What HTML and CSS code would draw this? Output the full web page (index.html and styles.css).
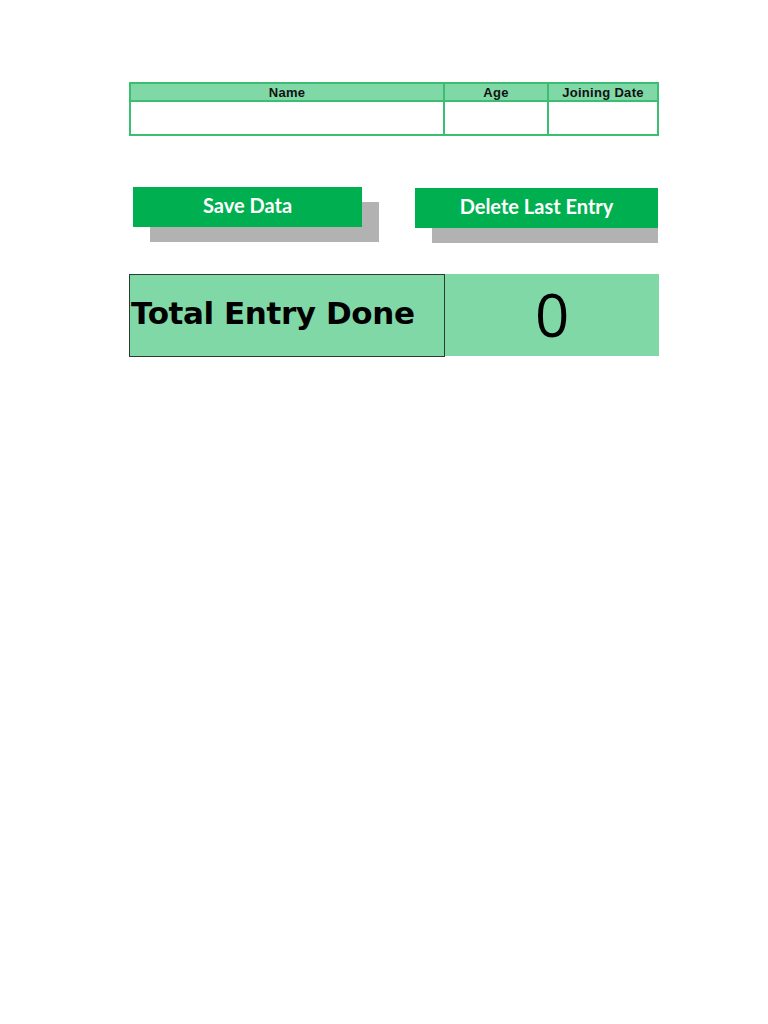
FILE: index.html
```html
<!DOCTYPE html>
<html>
<head>
    <meta charset="UTF-8">
    <title>Data Entry</title>
    <link rel="stylesheet" href="styles.css">
</head>
<body>
    <div class="sheet">
        <table class="entry-table">
            <tr>
                <th class="col-name">Name</th>
                <th class="col-age">Age</th>
                <th class="col-date">Joining Date</th>
            </tr>
            <tr>
                <td></td>
                <td></td>
                <td></td>
            </tr>
        </table>

        <div class="actions">
            <button class="btn btn-save">Save Data</button>
            <button class="btn btn-delete">Delete Last Entry</button>
        </div>

        <div class="total-row">
            <div class="total-label">Total Entry Done</div>
            <div class="total-value">0</div>
        </div>
    </div>
</body>
</html>
```

FILE: styles.css
```css
body {
    margin: 0;
    background: #ffffff;
    font-family: 'Liberation Sans', Arial, sans-serif;
}
.sheet {
    width: 530px;
    padding: 82px 0 0 129px;
}
.entry-table {
    width: 530px;
    border-collapse: collapse;
    table-layout: fixed;
}
.entry-table th,
.entry-table td {
    border: 2px solid #3cbe72;
    padding: 0;
}
.entry-table th {
    height: 16px;
    background: #80d8a6;
    font-size: 13px;
    font-weight: bold;
    color: #111;
    letter-spacing: 0.3px;
}
.entry-table td {
    height: 32px;
}
.col-name {
    width: 312px;
}
.col-age {
    width: 102px;
}
.col-date {
    vertical-align: bottom;
}
.actions {
    display: flex;
    margin-top: 51px;
    padding-bottom: 15px;
}
.btn {
    height: 40px;
    border: none;
    background: #00b050;
    color: #ffffff;
    font-family: Lato, 'Open Sans', sans-serif;
    font-weight: bold;
    font-size: 20px;
    padding: 0 0 4px 0;
    cursor: pointer;
    box-shadow: 17px 15px 0 #b2b2b2;
}
.btn-save {
    width: 229px;
    margin-left: 4px;
}
.btn-delete {
    width: 243px;
    margin-left: 53px;
    margin-top: 1px;
    clip-path: inset(0 0 -20px 0);
}
.total-row {
    display: flex;
    margin-top: 31px;
}
.total-label {
    width: 314px;
    height: 75px;
    border: 1px solid #2f3a33;
    background: #80d8a6;
    display: flex;
    align-items: center;
    font-family: 'DejaVu Sans', sans-serif;
    font-weight: bold;
    font-size: 31px;
    letter-spacing: -0.4px;
    color: #000;
    padding-left: 1px;
    padding-bottom: 6px;
}
.total-value {
    width: 214px;
    height: 82px;
    background: #80d8a6;
    display: flex;
    align-items: center;
    justify-content: center;
    font-family: 'Open Sans', sans-serif;
    font-size: 60px;
    color: #000;
    padding-bottom: 2px;
    box-sizing: border-box;
}
```
